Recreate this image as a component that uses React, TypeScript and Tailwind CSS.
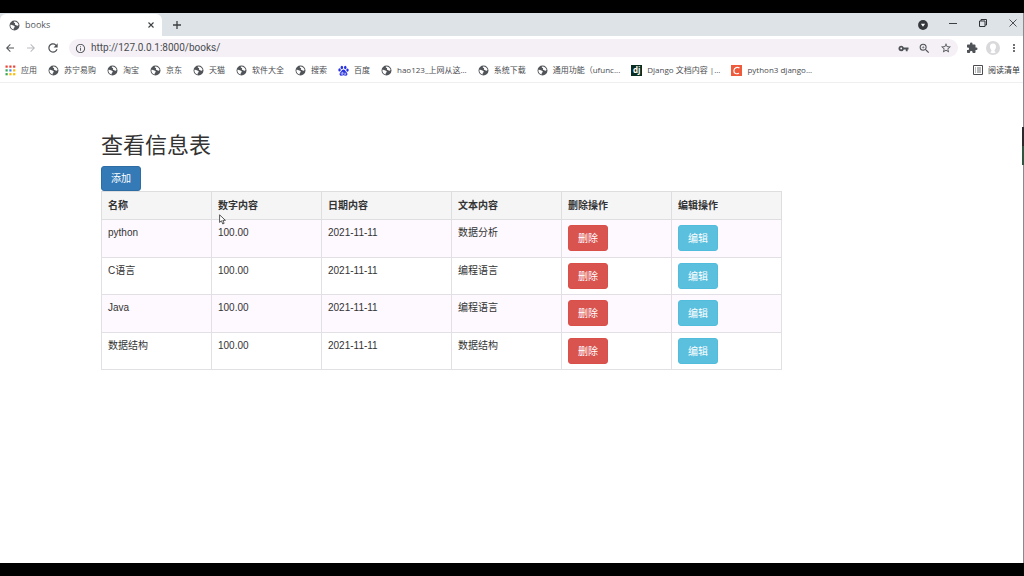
import {
  MdArrowBack,
  MdArrowForward,
  MdExtension,
  MdInfoOutline,
  MdMoreVert,
  MdRefresh,
  MdStarBorder,
  MdVpnKey,
  MdZoomIn,
} from "react-icons/md";

interface IBook {
  name: string;
  price: string;
  date: string;
  content: string;
}

interface IBookmark {
  label: string;
  icon: "apps" | "globe" | "baidu" | "django" | "csdn";
}

const bookmarks: IBookmark[] = [
  { label: "应用", icon: "apps" },
  { label: "苏宁易购", icon: "globe" },
  { label: "淘宝", icon: "globe" },
  { label: "京东", icon: "globe" },
  { label: "天猫", icon: "globe" },
  { label: "软件大全", icon: "globe" },
  { label: "搜索", icon: "globe" },
  { label: "百度", icon: "baidu" },
  { label: "hao123_上网从这...", icon: "globe" },
  { label: "系统下载", icon: "globe" },
  { label: "通用功能（ufunc...", icon: "globe" },
  { label: "Django 文档内容 |...", icon: "django" },
  { label: "python3 django...", icon: "csdn" },
];

const books: IBook[] = [
  { name: "python", price: "100.00", date: "2021-11-11", content: "数据分析" },
  { name: "C语言", price: "100.00", date: "2021-11-11", content: "编程语言" },
  { name: "Java", price: "100.00", date: "2021-11-11", content: "编程语言" },
  { name: "数据结构", price: "100.00", date: "2021-11-11", content: "数据结构" },
];

const columns = [
  { title: "名称", width: "w-[110px]" },
  { title: "数字内容", width: "w-[110px]" },
  { title: "日期内容", width: "w-[130px]" },
  { title: "文本内容", width: "w-[110px]" },
  { title: "删除操作", width: "w-[110px]" },
  { title: "编辑操作", width: "w-[110px]" },
];

const appDots = [
  "#ea4335", "#ea4335", "#ea4335",
  "#34a853", "#4285f4", "#fbbc04",
  "#34a853", "#fbbc04", "#fbbc04",
];

const GlobeIcon = () => (
  <svg viewBox="0 0 20 20" className="size-[11px] shrink-0">
    <circle cx="10" cy="10" r="9" fill="#505357" />
    <path
      d="M2.6 8.6 C4.4 8.8 6.6 8.8 8 10 C9.6 10.6 10.4 11 10.4 12.4 C10.4 13.8 8.8 13.4 8.6 14.8 C8.6 15.8 8.6 16.6 8 17.2 C4.4 16.4 2 12.6 2.6 8.6Z"
      fill="#fff"
    />
    <path
      d="M9.4 2.6 C13.4 2.4 16.6 4.8 17.4 8.6 C16.6 10.4 15.4 10.6 14 9.8 C12.8 9 11.8 9.4 11 8.6 C10 7.6 11.8 6.8 11 6 C10.2 5.2 8.6 5.4 8.6 4.2 C8.6 3.4 8.8 3 9.4 2.6Z"
      fill="#fff"
    />
  </svg>
);

const BookmarkIcon = ({ icon }: { icon: IBookmark["icon"] }) => {
  if (icon === "globe") return <GlobeIcon />;
  if (icon === "apps")
    return (
      <svg viewBox="0 0 11 11" className="size-[11px] shrink-0">
        {appDots.map((color, i) => (
          <rect
            key={i}
            x={0.5 + (i % 3) * 3.8}
            y={0.5 + Math.floor(i / 3) * 3.8}
            width="2.2"
            height="2.2"
            fill={color}
          />
        ))}
      </svg>
    );
  if (icon === "baidu")
    return (
      <svg viewBox="0 0 20 20" className="size-[11px] shrink-0" fill="#2932e1">
        <ellipse cx="7" cy="4.4" rx="2.3" ry="3.2" />
        <ellipse cx="13.2" cy="4.4" rx="2.3" ry="3.2" />
        <ellipse cx="2.8" cy="9" rx="2.2" ry="2.9" />
        <ellipse cx="17.2" cy="9.2" rx="2.2" ry="2.9" />
        <path d="M10 8.4 C12.6 8.4 13 11 15 12.6 C18.4 15.4 17.4 19.4 14 19.4 C12 19.4 11.6 18.8 10 18.8 C8.4 18.8 8 19.4 6 19.4 C2.6 19.4 1.6 15.4 5 12.6 C7 11 7.4 8.4 10 8.4Z" />
        <path
          d="M8.6 12.4 V17 H7 C5.2 17 5.2 14.2 7 14.2 H8.6 M11 14 V16 C11 17 11.6 17 14 17 V14"
          fill="none"
          stroke="#fff"
          strokeWidth="1.1"
        />
      </svg>
    );
  if (icon === "django")
    return (
      <span className="flex size-[11px] shrink-0 items-center justify-center bg-[#092e20] text-[8px] leading-[10px] font-bold text-white">
        dj
      </span>
    );
  return (
    <svg viewBox="0 0 22 22" className="size-[11px] shrink-0">
      <rect width="22" height="22" fill="#ee5a3c" />
      <path
        d="M17 6 C13 3.6 6.6 4.6 5.8 11 C5.2 17.4 11.4 18.6 16 16.4"
        fill="none"
        stroke="#fff"
        strokeWidth="2.4"
      />
    </svg>
  );
};

const TabStrip = () => (
  <div className="flex h-[23px] items-stretch bg-[#dee3e7] pt-px pr-px">
    <div className="flex w-[162px] items-center gap-[5px] rounded-t-md bg-white pr-[6px] pl-[9px]">
      <GlobeIcon />
      <span className="flex-1 text-[9px] leading-3 text-[#55585c]">books</span>
      <button aria-label="Close tab" className="flex size-[10px] items-center justify-center">
        <svg viewBox="0 0 6 6" className="size-[6px]" stroke="#3c4043" strokeWidth="1.1">
          <path d="M0.5 0.5 L5.5 5.5 M5.5 0.5 L0.5 5.5" />
        </svg>
      </button>
    </div>
    <button aria-label="New tab" className="flex w-[30px] items-center justify-center pb-px">
      <svg viewBox="0 0 8 8" className="size-2" stroke="#3c4043" strokeWidth="1.3">
        <path d="M4 0 V8 M0 4 H8" />
      </svg>
    </button>
    <div className="ml-auto flex gap-[10px] pb-1">
      <button aria-label="Search tabs" className="flex w-5 items-center justify-center pt-1">
        <svg viewBox="0 0 10 10" className="size-[10px]">
          <circle cx="5" cy="5" r="4.9" fill="#35383c" />
          <path d="M2.9 3.8 H7.1 L5 6.8Z" fill="#fff" />
        </svg>
      </button>
      <button aria-label="Minimize" className="flex w-5 items-center justify-center">
        <svg viewBox="0 0 8 8" className="size-2" stroke="#3c4043">
          <path d="M0 4.5 H8" />
        </svg>
      </button>
      <button aria-label="Restore" className="flex w-5 items-center justify-center">
        <svg viewBox="0 0 8 8" className="size-2" stroke="#303336" fill="none">
          <path d="M0.5 2 H6 V7.5 H0.5Z M2 2 V0.5 H7.5 V6 H6" />
        </svg>
      </button>
      <button aria-label="Close" className="flex w-5 items-center justify-center">
        <svg viewBox="0 0 8 8" className="size-2" stroke="#3c4043" strokeWidth="0.9">
          <path d="M0.5 0.5 L7.5 7.5 M7.5 0.5 L0.5 7.5" />
        </svg>
      </button>
    </div>
  </div>
);

const Toolbar = () => (
  <div className="flex h-6 items-center pr-1 pl-1 text-[#4f5357]">
    <div className="flex gap-[9px]">
      <button aria-label="Back">
        <MdArrowBack className="size-3" />
      </button>
      <button aria-label="Forward" className="text-[#b9bbbe]">
        <MdArrowForward className="size-3" />
      </button>
      <button aria-label="Reload">
        <MdRefresh className="size-[14px]" />
      </button>
    </div>
    <div className="mr-2 ml-[9px] flex h-[18px] flex-1 items-center rounded-full bg-[#f5f0f6] pr-[6px] pl-[6px]">
      <MdInfoOutline className="size-[11px] shrink-0" />
      <input
        aria-label="Address"
        className="ml-[5px] min-w-0 flex-1 bg-transparent font-['Roboto',sans-serif] text-[10px] leading-4 text-[#494c50] outline-none"
        defaultValue="http://127.0.0.1:8000/books/"
      />
      <div className="flex items-center gap-[9px]">
        <button aria-label="Passwords">
          <MdVpnKey className="size-[11px]" />
        </button>
        <button aria-label="Zoom">
          <MdZoomIn className="size-[13px]" />
        </button>
        <button aria-label="Bookmark this page">
          <MdStarBorder className="size-[12px]" />
        </button>
      </div>
    </div>
    <div className="flex items-center gap-2">
      <button aria-label="Extensions">
        <MdExtension className="size-[12px]" />
      </button>
      <button aria-label="Profile">
        <svg viewBox="0 0 28 28" className="size-[14px]">
          <circle cx="14" cy="14" r="14" fill="#d9d9db" />
          <path
            d="M14 5 C9.6 5 7.6 8.4 8 12 C8.4 15.4 10 17 11 18.4 C11.6 20 10 21 8.4 22.4 C11.6 25 16.4 25 19.6 22.4 C18 21 16.4 20 17 18.4 C18 17 19.6 15.4 20 12 C20.4 8.4 18.4 5 14 5Z"
            fill="#fff"
          />
        </svg>
      </button>
      <button aria-label="Menu">
        <MdMoreVert className="size-3" />
      </button>
    </div>
  </div>
);

const BookmarksBar = () => (
  <nav className="flex h-[23px] items-center gap-[11px] border-b border-[#f0eef1] pr-1 pb-[2px] pl-[5px] text-[8px] leading-3 whitespace-nowrap text-[#4a4c50]">
    {bookmarks.map((bookmark) => (
      <a key={bookmark.label} href="#" className="flex items-center gap-[5px]">
        <BookmarkIcon icon={bookmark.icon} />
        {bookmark.label}
      </a>
    ))}
    <a href="#" className="ml-auto flex items-center gap-[5px] text-[#303236]">
      <svg viewBox="0 0 10 10" className="size-[10px]" stroke="#4a4c50" fill="none">
        <path d="M0.5 0.5 H9.5 V9.5 H0.5Z" />
        <path d="M2 3 H3 M4 3 H8 M2 5 H3 M4 5 H8 M2 7 H3 M4 7 H8" strokeWidth="0.8" />
      </svg>
      阅读清单
    </a>
  </nav>
);

const BooksPage = () => (
  <main className="flex-1 px-[101px] pt-[50px] text-[#333]">
    <h1 className="text-[22px] leading-[26px]">查看信息表</h1>
    <button className="mt-[7px] block h-[25px] w-10 rounded-[3px] border border-[#2e6da4] bg-[#337ab7] text-[10px] leading-4 text-white">
      添加
    </button>
    <table className="w-full max-w-[681px] table-fixed border-collapse text-left text-[10px] leading-[15px]">
      <thead>
        <tr className="h-7 bg-[#f5f5f6]">
          {columns.map((column) => (
            <th
              key={column.title}
              className={`${column.width} border border-[#dedde0] px-[6px] font-bold`}
            >
              {column.title}
            </th>
          ))}
        </tr>
      </thead>
      <tbody className="align-top">
        {books.map((book) => (
          <tr key={book.name} className="h-[37px] odd:h-[38px] odd:bg-[#fdf9fe]">
            <td className="border border-[#e2e0e4] px-[6px] pt-[5px]">{book.name}</td>
            <td className="border border-[#e2e0e4] px-[6px] pt-[5px]">{book.price}</td>
            <td className="border border-[#e2e0e4] px-[6px] pt-[5px]">{book.date}</td>
            <td className="border border-[#e2e0e4] px-[6px] pt-[5px]">{book.content}</td>
            <td className="border border-[#e2e0e4] px-[6px] pt-[5px]">
              <button className="block h-[26px] w-10 rounded-[3px] border border-[#d9504b] bg-[#d9534f] text-white">
                删除
              </button>
            </td>
            <td className="border border-[#e2e0e4] px-[6px] pt-[5px]">
              <button className="block h-[26px] w-10 rounded-[3px] border border-[#52bcdc] bg-[#5bc0de] text-white">
                编辑
              </button>
            </td>
          </tr>
        ))}
      </tbody>
    </table>
  </main>
);

const App = () => {
  return (
    <div className="relative flex min-h-screen flex-col border-y-[13px] border-black bg-white font-['Liberation_Sans','Noto_Sans_CJK_SC',sans-serif]">
      <header className="font-['Open_Sans','Noto_Sans_CJK_SC',sans-serif]">
        <TabStrip />
        <Toolbar />
        <BookmarksBar />
      </header>
      <BooksPage />

      {/* window edge with the recorder handle */}
      <div className="absolute inset-y-0 right-0 w-px bg-[#8a8a8c]">
        <div className="absolute top-[114px] right-0 h-[19px] w-[2px] bg-[#2b2b2d]" />
        <div className="absolute top-[133px] right-0 h-[19px] w-[2px] bg-[#2f5540]" />
      </div>

      {/* mouse pointer */}
      <svg viewBox="0 0 12 18" className="absolute top-[201px] left-[219px] h-[11px] w-[7px]">
        <path
          d="M1 1 V14 L4.2 11.2 L6.4 16.6 L8.8 15.6 L6.6 10.4 H11Z"
          fill="#fff"
          stroke="#333"
          strokeWidth="1.4"
        />
      </svg>
    </div>
  );
};

export default App;
